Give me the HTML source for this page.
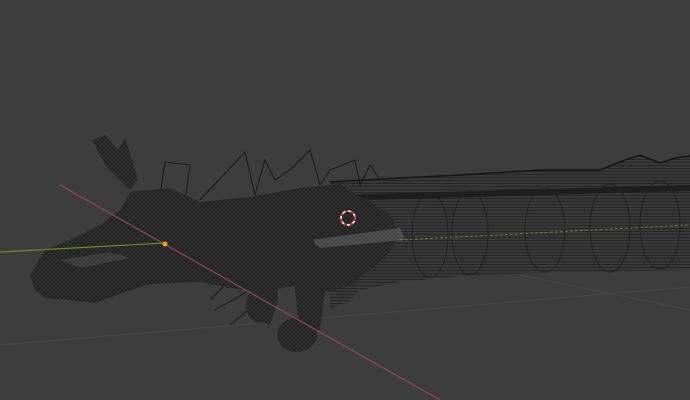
<!DOCTYPE html>
<html><head><meta charset="utf-8"><style>
html,body{margin:0;padding:0;background:#3d3d3d;width:690px;height:400px;overflow:hidden}
svg{display:block}
</style></head><body>
<svg width="690" height="400" viewBox="0 0 690 400" xmlns="http://www.w3.org/2000/svg">
<defs>
<pattern id="h" width="6" height="3" patternUnits="userSpaceOnUse">
<rect width="6" height="3" fill="#383838"/><line x1="0" y1="0.5" x2="6" y2="0.5" stroke="#222" stroke-width="0.8"/>
</pattern>
<pattern id="m" width="4" height="4" patternUnits="userSpaceOnUse">
<rect width="4" height="4" fill="#303030"/><path d="M0 0L4 4M4 0L0 4" stroke="#1c1c1c" stroke-width="0.6"/>
</pattern>
</defs>
<rect width="690" height="400" fill="#3d3d3d"/>
<line x1="0" y1="345" x2="690" y2="287" stroke="#474747" stroke-width="1"/>
<line x1="520" y1="275" x2="690" y2="310" stroke="#474747" stroke-width="1"/>
<path d="M330 182 L400 178 L460 175 L540 170 L600 170 L625 160 L640 155 L660 163 L675 158 L690 156 L690 270 L560 272 L460 276 L400 282 L360 290 L350 300 L330 310 Z" fill="url(#h)"/>
<path d="M330 182 L400 178 L460 175 L540 170 L600 170 L625 160 L640 155 L660 163 L675 158 L690 156" fill="none" stroke="#151515" stroke-width="1.5"/>
<path d="M330 198 L690 188" stroke="#1e1e1e" stroke-width="6"/>
<path d="M400 240 L690 225" stroke="#6a7a3a" stroke-width="1" stroke-dasharray="3 2"/>
<g fill="none" stroke="#222" stroke-width="1">
<ellipse cx="430" cy="235" rx="18" ry="42"/><ellipse cx="470" cy="233" rx="18" ry="42"/><ellipse cx="545" cy="230" rx="20" ry="42"/><ellipse cx="610" cy="228" rx="20" ry="44"/><ellipse cx="660" cy="225" rx="20" ry="44"/>
</g>
<g fill="none" stroke="#1a1a1a" stroke-width="1">
<path d="M200 200 L245 152 L255 195 L265 160 L275 180 L290 170 L310 150 L320 185 L330 170 L355 160 L360 185 L370 165 L380 180"/>
<path d="M160 195 L165 162 L190 165 L185 200"/>
<path d="M210 300 L240 270 M215 310 L250 290 M230 325 L260 300"/>
</g>
<path d="M30 275 L45 250 L70 240 L100 225 L120 210 L130 192 L170 188 L200 202 L250 197 L300 188 L340 184 L360 196 L390 215 L400 235 L385 258 L350 285 L330 292 L300 285 L260 292 L230 288 L200 282 L150 284 L125 292 L95 303 L70 300 L45 298 L35 290 Z" fill="url(#m)"/>
<path d="M92 140 L105 135 L118 150 L125 138 L132 160 L138 180 L130 190 L120 180 L105 165 Z" fill="url(#m)"/>
<path d="M310 240 L400 228 L405 240 L320 248 Z" fill="#8a8a8a" opacity="0.35"/>
<path d="M60 260 L110 252 L130 258 L80 268 Z" fill="#777" opacity="0.25"/>
<path d="M250 240 L275 238 L278 300 L270 325 L255 320 L248 280 Z" fill="url(#m)"/>
<path d="M290 225 L310 222 L325 290 L320 330 L300 335 L295 290 Z" fill="url(#m)"/>
<ellipse cx="297" cy="335" rx="20" ry="17" fill="url(#m)"/>
<ellipse cx="260" cy="305" rx="14" ry="18" fill="url(#m)"/>
<line x1="60" y1="185" x2="440" y2="400" stroke="#9a4a5a" stroke-width="1.2" opacity="0.9"/>
<line x1="0" y1="252" x2="165" y2="243" stroke="#6a8a2a" stroke-width="1.2"/>
<circle cx="165" cy="244" r="2.5" fill="#f0a020"/>
<circle cx="348" cy="218" r="7" fill="none" stroke="#fff" stroke-width="1.6"/>
<circle cx="348" cy="218" r="7" fill="none" stroke="#d02020" stroke-width="1.6" stroke-dasharray="3 3"/>
</svg>
</body></html>
